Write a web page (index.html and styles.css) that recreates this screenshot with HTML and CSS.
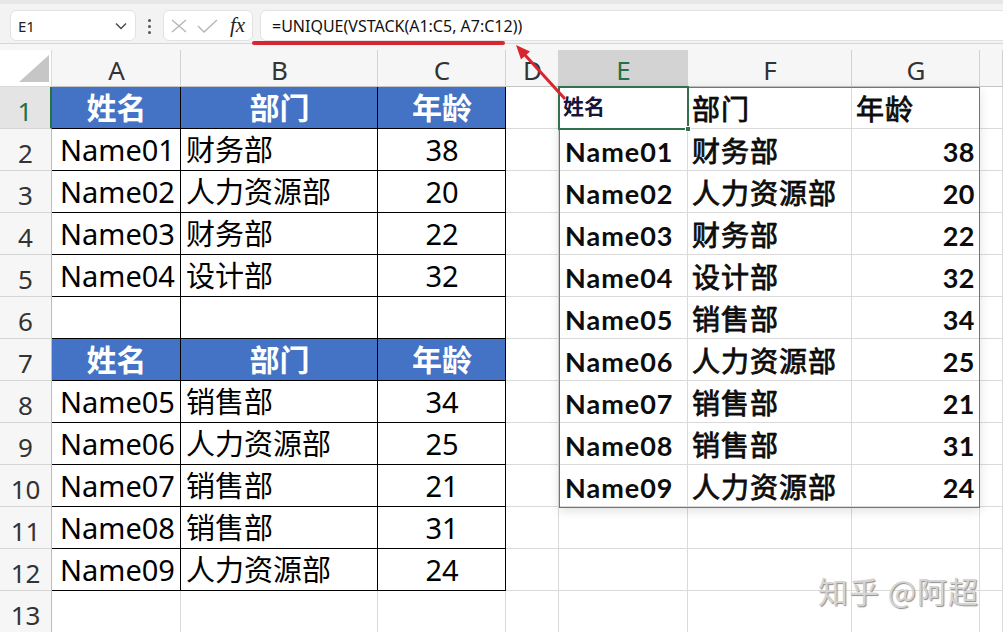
FILE: index.html
```html
<!doctype html>
<html lang="zh-CN">
<head>
<meta charset="utf-8">
<title>UNIQUE VSTACK</title>
<link rel="stylesheet" href="styles.css">
</head>
<body>
<div class="app">

  <div class="bar">
    <div class="box namebox">
      <span>E1</span>
      <svg width="12" height="8" viewBox="0 0 12 8"><polyline points="1,1.5 6,6.5 11,1.5" fill="none" stroke="#444" stroke-width="1.3"/></svg>
    </div>
    <div class="dots"><i></i><i></i><i></i></div>
    <div class="box fxbox">
      <svg width="16" height="14" viewBox="0 0 16 14"><path d="M1 1L15 13M15 1L1 13" stroke="#b4b4b4" stroke-width="1.3" fill="none"/></svg>
      <svg width="21" height="14" viewBox="0 0 21 14"><polyline points="1,7 7,13 20,1" fill="none" stroke="#b4b4b4" stroke-width="1.3"/></svg>
      <span class="fx">fx</span>
    </div>
    <div class="box formula">=UNIQUE(VSTACK(A1:C5, A7:C12))</div>
  </div>

  <div class="sheet">
    <!-- column headers -->
    <div class="c corner"><span></span></div>
    <div class="c ch">A</div>
    <div class="c ch">B</div>
    <div class="c ch">C</div>
    <div class="c ch">D</div>
    <div class="c ch sel">E</div>
    <div class="c ch">F</div>
    <div class="c ch">G</div>
    <div class="c ch"></div>

    <!-- 1 -->
    <div class="c rh sel">1</div>
    <div class="c t th">姓名</div>
    <div class="c t th">部门</div>
    <div class="c t th">年龄</div>
    <div class="c"></div>
    <div class="c sp first">姓名</div>
    <div class="c sp dep">部门</div>
    <div class="c sp dep">年龄</div>
    <div class="c"></div>

    <!-- 2 -->
    <div class="c rh">2</div>
    <div class="c t name">Name01</div>
    <div class="c t">财务部</div>
    <div class="c t mid">38</div>
    <div class="c"></div>
    <div class="c sp">Name01</div>
    <div class="c sp dep">财务部</div>
    <div class="c sp r">38</div>
    <div class="c"></div>

    <!-- 3 -->
    <div class="c rh">3</div>
    <div class="c t name">Name02</div>
    <div class="c t">人力资源部</div>
    <div class="c t mid">20</div>
    <div class="c"></div>
    <div class="c sp">Name02</div>
    <div class="c sp dep">人力资源部</div>
    <div class="c sp r">20</div>
    <div class="c"></div>

    <!-- 4 -->
    <div class="c rh">4</div>
    <div class="c t name">Name03</div>
    <div class="c t">财务部</div>
    <div class="c t mid">22</div>
    <div class="c"></div>
    <div class="c sp">Name03</div>
    <div class="c sp dep">财务部</div>
    <div class="c sp r">22</div>
    <div class="c"></div>

    <!-- 5 -->
    <div class="c rh">5</div>
    <div class="c t name">Name04</div>
    <div class="c t">设计部</div>
    <div class="c t mid">32</div>
    <div class="c"></div>
    <div class="c sp">Name04</div>
    <div class="c sp dep">设计部</div>
    <div class="c sp r">32</div>
    <div class="c"></div>

    <!-- 6 -->
    <div class="c rh">6</div>
    <div class="c t"></div>
    <div class="c t"></div>
    <div class="c t"></div>
    <div class="c"></div>
    <div class="c sp">Name05</div>
    <div class="c sp dep">销售部</div>
    <div class="c sp r">34</div>
    <div class="c"></div>

    <!-- 7 -->
    <div class="c rh">7</div>
    <div class="c t th">姓名</div>
    <div class="c t th">部门</div>
    <div class="c t th">年龄</div>
    <div class="c"></div>
    <div class="c sp">Name06</div>
    <div class="c sp dep">人力资源部</div>
    <div class="c sp r">25</div>
    <div class="c"></div>

    <!-- 8 -->
    <div class="c rh">8</div>
    <div class="c t name">Name05</div>
    <div class="c t">销售部</div>
    <div class="c t mid">34</div>
    <div class="c"></div>
    <div class="c sp">Name07</div>
    <div class="c sp dep">销售部</div>
    <div class="c sp r">21</div>
    <div class="c"></div>

    <!-- 9 -->
    <div class="c rh">9</div>
    <div class="c t name">Name06</div>
    <div class="c t">人力资源部</div>
    <div class="c t mid">25</div>
    <div class="c"></div>
    <div class="c sp">Name08</div>
    <div class="c sp dep">销售部</div>
    <div class="c sp r">31</div>
    <div class="c"></div>

    <!-- 10 -->
    <div class="c rh">10</div>
    <div class="c t name">Name07</div>
    <div class="c t">销售部</div>
    <div class="c t mid">21</div>
    <div class="c"></div>
    <div class="c sp">Name09</div>
    <div class="c sp dep">人力资源部</div>
    <div class="c sp r">24</div>
    <div class="c"></div>

    <!-- 11 -->
    <div class="c rh">11</div>
    <div class="c t name">Name08</div>
    <div class="c t">销售部</div>
    <div class="c t mid">31</div>
    <div class="c"></div>
    <div class="c"></div>
    <div class="c"></div>
    <div class="c"></div>
    <div class="c"></div>

    <!-- 12 -->
    <div class="c rh">12</div>
    <div class="c t name">Name09</div>
    <div class="c t">人力资源部</div>
    <div class="c t mid">24</div>
    <div class="c"></div>
    <div class="c"></div>
    <div class="c"></div>
    <div class="c"></div>
    <div class="c"></div>

    <!-- 13 -->
    <div class="c rh">13</div>
    <div class="c"></div>
    <div class="c"></div>
    <div class="c"></div>
    <div class="c"></div>
    <div class="c"></div>
    <div class="c"></div>
    <div class="c"></div>
    <div class="c"></div>
  </div>

  <!-- things drawn over the grid -->
  <div class="spill"></div>
  <div class="cursor"><i></i></div>
  <div class="underline"></div>
  <svg class="arrow" width="1003" height="632" viewBox="0 0 1003 632">
    <line x1="565" y1="99" x2="525" y2="55" stroke="#d9262e" stroke-width="3"/>
    <polygon points="516,45 530,51.4 521,59.4" fill="#d9262e"/>
  </svg>
  <div class="mark">知乎 @阿超</div>
</div>
</body>
</html>
```

FILE: styles.css
```css
* {
    box-sizing: border-box;
}
body {
    margin: 0;
    background: #fff;
    font-family: "Noto Sans", "Noto Sans CJK SC", sans-serif;
    color: #000;
}
.app {
    position: relative;
    width: 1003px;
    height: 632px;
    overflow: hidden;
}

/* formula bar */
.bar {
    display: flex;
    align-items: flex-start;
    height: 44px;
    padding: 6px 0 0 10px;
    background: #f3f3f3;
    border-top: 4px solid #e7e7e7;
    border-bottom: 1px solid #d6d6d6;
}
.box {
    display: flex;
    align-items: center;
    height: 31px;
    background: #fff;
    border: 1px solid #e2e2e2;
    border-radius: 6px;
}
.namebox {
    width: 126px;
    justify-content: space-between;
    padding: 0 8px 0 7px;
    font-size: 15px;
    color: #222;
}
.dots {
    display: flex;
    flex-direction: column;
    align-items: center;
    gap: 3px;
    width: 27px;
    padding-top: 9px;
}
.dots i {
    width: 3px;
    height: 3px;
    background: #555;
    border-radius: 50%;
}
.fxbox {
    width: 90px;
    padding: 0 6px 0 7px;
    gap: 10px;
}
.fx {
    font-family: "Liberation Serif", serif;
    font-style: italic;
    font-size: 21px;
    margin-left: 2px;
    color: #222;
}
.formula {
    flex: 1;
    margin: 0 -10px 0 7px;
    padding-left: 11px;
    font-size: 16px;
    color: #111;
}

/* grid */
.sheet {
    display: grid;
    grid-template-columns: 52px 129px 197px 128px 53px 129px 164px 128px 1fr;
    grid-template-rows: 37px repeat(13, 42px);
    padding-top: 6px;
    background: #f6f6f6;
}
.c {
    display: flex;
    align-items: flex-end;
    padding: 0 4px 1px 5px;
    background: #fff;
    border-right: 1px solid #dadada;
    border-bottom: 1px solid #dadada;
    font-size: 29px;
    line-height: 38px;
    white-space: nowrap;
}
.ch, .rh {
    justify-content: center;
    background: #f6f6f6;
    font-size: 26px;
    line-height: 30px;
    color: #333;
}
.ch {
    border-right-color: #d2d2d2;
    border-bottom-color: #c4c4c4;
}
.rh {
    padding: 0 0 2px;
    border-right-color: #bcbcbc;
    border-bottom-color: #d4d4d4;
}
.ch.sel {
    background: #d3d3d3;
    color: #217346;
}
.rh.sel {
    background: #e4e4e4;
    color: #217346;
    border-right: 2px solid #217346;
}
.corner {
    justify-content: flex-end;
    padding: 0 2px 4px 0;
}
.corner span {
    width: 30px;
    height: 27px;
    background: #c6c6c6;
    clip-path: polygon(100% 0, 100% 100%, 0 100%);
}

/* source tables */
.t {
    border-right-color: #000;
    border-bottom-color: #000;
}
.name {
    padding-left: 8px;
}
.mid {
    justify-content: center;
}
.th {
    justify-content: center;
    background: #4472c4;
    color: #fff;
    font-weight: bold;
    font-size: 30px;
}

/* spilled result */
.sp {
    font-family: "Lato", "Noto Sans CJK SC", sans-serif;
    font-weight: bold;
    font-size: 27px;
    line-height: 35px;
    letter-spacing: 1px;
    padding-left: 6px;
    color: #0d0d0d;
}
.sp.dep {
    font-family: "Noto Sans CJK SC", sans-serif;
    font-weight: normal;
    -webkit-text-stroke: 0.8px #0d0d0d;
    font-size: 28px;
    line-height: 38px;
    padding: 0 0 1px 4px;
}
.sp.first {
    font-family: "Noto Sans CJK SC", sans-serif;
    font-size: 21px;
    letter-spacing: 0;
    padding: 0 0 5px 4px;
    color: #15153d;
}
.r {
    justify-content: flex-end;
    padding-right: 4px;
    letter-spacing: 0.5px;
}

/* overlays */
.spill {
    position: absolute;
    left: 559px;
    top: 87px;
    width: 421px;
    height: 421px;
    border: 1px solid #5d78a8;
    box-shadow: 0 3px 10px rgba(0, 0, 0, 0.12);
    pointer-events: none;
}
.cursor {
    position: absolute;
    left: 558px;
    top: 86px;
    width: 131px;
    height: 44px;
    border: 2px solid #33704c;
}
.cursor i {
    position: absolute;
    right: -4px;
    bottom: -4px;
    width: 6px;
    height: 6px;
    background: #33704c;
    border: 1px solid #fff;
}
.underline {
    position: absolute;
    left: 252px;
    top: 41px;
    width: 253px;
    height: 4px;
    border-radius: 2px;
    background: #d9262e;
}
.arrow {
    position: absolute;
    left: 0;
    top: 0;
}
.mark {
    position: absolute;
    left: 818px;
    top: 568px;
    font-family: "Noto Sans CJK SC", sans-serif;
    font-size: 30px;
    letter-spacing: 1px;
    color: #d4d4d4;
    text-shadow: 1px 1px 1px #8f8f8f;
}
```
